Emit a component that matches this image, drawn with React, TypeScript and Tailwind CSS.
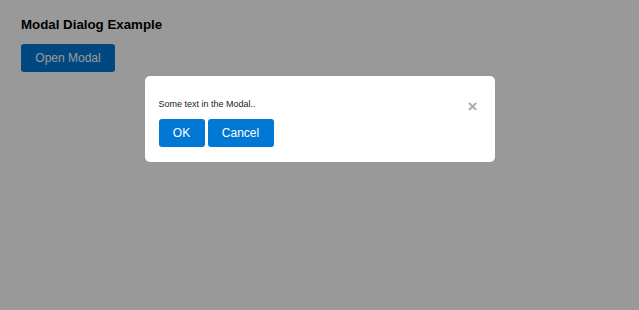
import React from 'react';

const App: React.FC = () => {
  return (
    <div className="relative h-[310px] w-full overflow-hidden bg-white font-['Liberation_Sans',Arial,sans-serif]">
      <div className="flex flex-col items-start pl-[21px] pt-[17px]">
        <h2 className="text-[13.3px] font-bold leading-[15px] text-black">Modal Dialog Example</h2>
        <button className="mt-[12px] flex h-[28px] w-[94px] items-center justify-center rounded-[3px] bg-[#0078d4] text-[12px] text-white">
          Open Modal
        </button>
      </div>

      <div className="absolute inset-0 flex justify-center bg-black/40 pt-[76px]">
        <div className="flex h-[86px] w-[350px] flex-col rounded-[5px] bg-white pl-[14px] pr-[17px] pt-[23px]">
          <div className="flex h-[11px] items-center justify-between">
            <p className="text-[9px] leading-[11px] text-[#222]">Some text in the Modal..</p>
            <span className="relative top-[2px] text-[17px] font-bold leading-[11px] text-[#aaaaaa]">×</span>
          </div>
          <div className="mt-[9px] flex gap-[3px]">
            <button className="flex h-[28px] w-[46px] items-center justify-center rounded-[3px] bg-[#0078d4] text-[12px] text-white">
              OK
            </button>
            <button className="flex h-[28px] w-[66px] items-center justify-center rounded-[3px] bg-[#0078d4] text-[12px] text-white">
              Cancel
            </button>
          </div>
        </div>
      </div>
    </div>
  );
};

export default App;
